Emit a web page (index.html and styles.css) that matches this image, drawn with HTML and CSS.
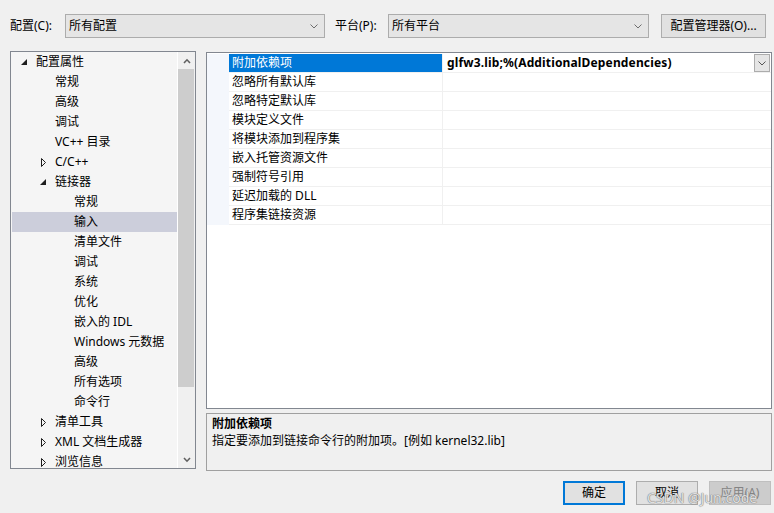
FILE: index.html
```html
<!DOCTYPE html>
<html lang="zh-CN">
<head>
<meta charset="utf-8">
<title>属性页</title>
<link rel="stylesheet" href="styles.css">
</head>
<body>
<div class="dialog">
  <div class="toolbar">
    <span class="lbl">配置(C):</span>
    <div class="combo combo-config">
      <span>所有配置</span>
      <svg class="chev" width="8" height="5" viewBox="0 0 8 5"><path d="M0.5 0.5L4 4L7.5 0.5" stroke="#6d6d6d" fill="none"/></svg>
    </div>
    <span class="lbl lbl-platform">平台(P):</span>
    <div class="combo combo-platform">
      <span>所有平台</span>
      <svg class="chev" width="8" height="5" viewBox="0 0 8 5"><path d="M0.5 0.5L4 4L7.5 0.5" stroke="#6d6d6d" fill="none"/></svg>
    </div>
    <button class="btn btn-manager">配置管理器(O)...</button>
  </div>

  <div class="main">
    <div class="tree-panel">
      <ul class="tree">
        <li class="row l0"><span class="tog"><svg width="6" height="6" viewBox="0 0 6 6"><path d="M6 0V6H0Z" fill="#1e1e1e"/></svg></span>配置属性</li>
        <li class="row l1"><span class="tog"></span>常规</li>
        <li class="row l1"><span class="tog"></span>高级</li>
        <li class="row l1"><span class="tog"></span>调试</li>
        <li class="row l1"><span class="tog"></span>VC++ 目录</li>
        <li class="row l1"><span class="tog"><svg width="5" height="9" viewBox="0 0 5 9"><path d="M0.5 0.5L4.5 4.5L0.5 8.5Z" fill="none" stroke="#1e1e1e"/></svg></span>C/C++</li>
        <li class="row l1"><span class="tog"><svg width="6" height="6" viewBox="0 0 6 6"><path d="M6 0V6H0Z" fill="#1e1e1e"/></svg></span>链接器</li>
        <li class="row l2"><span class="tog"></span>常规</li>
        <li class="row l2 sel"><span class="tog"></span>输入</li>
        <li class="row l2"><span class="tog"></span>清单文件</li>
        <li class="row l2"><span class="tog"></span>调试</li>
        <li class="row l2"><span class="tog"></span>系统</li>
        <li class="row l2"><span class="tog"></span>优化</li>
        <li class="row l2"><span class="tog"></span>嵌入的 IDL</li>
        <li class="row l2"><span class="tog"></span>Windows 元数据</li>
        <li class="row l2"><span class="tog"></span>高级</li>
        <li class="row l2"><span class="tog"></span>所有选项</li>
        <li class="row l2"><span class="tog"></span>命令行</li>
        <li class="row l1"><span class="tog"><svg width="5" height="9" viewBox="0 0 5 9"><path d="M0.5 0.5L4.5 4.5L0.5 8.5Z" fill="none" stroke="#1e1e1e"/></svg></span>清单工具</li>
        <li class="row l1"><span class="tog"><svg width="5" height="9" viewBox="0 0 5 9"><path d="M0.5 0.5L4.5 4.5L0.5 8.5Z" fill="none" stroke="#1e1e1e"/></svg></span>XML 文档生成器</li>
        <li class="row l1"><span class="tog"><svg width="5" height="9" viewBox="0 0 5 9"><path d="M0.5 0.5L4.5 4.5L0.5 8.5Z" fill="none" stroke="#1e1e1e"/></svg></span>浏览信息</li>
      </ul>
      <div class="vscroll">
        <div class="sb-btn"><svg width="8" height="6" viewBox="0 0 8 6"><path d="M1 5L4 1.8L7 5" stroke="#606060" stroke-width="1.6" fill="none"/></svg></div>
        <div class="sb-track"><div class="thumb"></div></div>
        <div class="sb-btn"><svg width="8" height="6" viewBox="0 0 8 6"><path d="M1 1L4 4.2L7 1" stroke="#606060" stroke-width="1.6" fill="none"/></svg></div>
      </div>
    </div>

    <div class="right">
      <div class="grid">
        <div class="prow">
          <div class="gutter"></div>
          <div class="name sel-name">附加依赖项</div>
          <div class="value">
            <span class="val-text">glfw3.lib;%(AdditionalDependencies)</span>
            <span class="drop"><svg width="8" height="5" viewBox="0 0 8 5"><path d="M0.5 0.5L4 4L7.5 0.5" stroke="#555" fill="none"/></svg></span>
          </div>
        </div>
        <div class="prow"><div class="gutter"></div><div class="name">忽略所有默认库</div><div class="value"></div></div>
        <div class="prow"><div class="gutter"></div><div class="name">忽略特定默认库</div><div class="value"></div></div>
        <div class="prow"><div class="gutter"></div><div class="name">模块定义文件</div><div class="value"></div></div>
        <div class="prow"><div class="gutter"></div><div class="name">将模块添加到程序集</div><div class="value"></div></div>
        <div class="prow"><div class="gutter"></div><div class="name">嵌入托管资源文件</div><div class="value"></div></div>
        <div class="prow"><div class="gutter"></div><div class="name">强制符号引用</div><div class="value"></div></div>
        <div class="prow"><div class="gutter"></div><div class="name">延迟加载的 DLL</div><div class="value"></div></div>
        <div class="prow"><div class="gutter"></div><div class="name">程序集链接资源</div><div class="value"></div></div>
      </div>
      <div class="desc">
        <div class="desc-title">附加依赖项</div>
        <div class="desc-text">指定要添加到链接命令行的附加项。[例如 kernel32.lib]</div>
      </div>
    </div>
  </div>

  <div class="footer">
    <button class="btn btn-foot btn-ok">确定</button>
    <button class="btn btn-foot">取消</button>
    <button class="btn btn-foot btn-disabled">应用(A)</button>
  </div>

  <div class="watermark">CSDN @Jun.code</div>
</div>
</body>
</html>
```

FILE: styles.css
```css
* { box-sizing: border-box; }

body {
  margin: 0;
  background: #f0f0f0;
  font-family: "Noto Sans", "Noto Sans CJK SC", sans-serif;
  font-size: 12px;
  color: #000;
}

.dialog {
  width: 774px;
  height: 513px;
  position: relative;
  overflow: hidden;
}

/* ---------- top bar ---------- */
.toolbar {
  display: flex;
  align-items: center;
  padding: 14px 0 0 10px;
}

.lbl {
  width: 55px;
  line-height: 24px;
  white-space: nowrap;
}

.lbl-platform {
  margin-left: 10px;
  width: 53px;
}

.combo {
  height: 24px;
  border: 1px solid #acacac;
  background: #e5e5e5;
  display: flex;
  align-items: center;
  justify-content: space-between;
  padding: 0 6px 0 3px;
  line-height: 22px;
}

.combo-config { width: 260px; }
.combo-platform { width: 261px; }

.btn {
  font: inherit;
  color: #000;
  border: 1px solid #adadad;
  background: #e1e1e1;
  padding: 0;
  height: 24px;
  line-height: 20px;
}

.btn-manager {
  margin-left: 12px;
  width: 105px;
}

/* ---------- main area ---------- */
.main {
  display: flex;
  align-items: flex-start;
  margin-top: 13px;
  padding-left: 10px;
}

.tree-panel {
  width: 186px;
  height: 418px;
  border: 1px solid #828790;
  background: #f5f5f5;
  display: flex;
}

.tree {
  width: 167px;
  list-style: none;
  margin: 0;
  padding: 0 0 0 1px;
  overflow: hidden;
  border-right: 1px solid #ffffff;
}

.row {
  height: 20px;
  line-height: 20px;
  display: flex;
  align-items: center;
  white-space: nowrap;
}

.row.sel { background: #cccedb; }

.l0 { padding-left: 5px; }
.l1 { padding-left: 24px; }
.l2 { padding-left: 43px; }

.tog {
  width: 14px;
  margin-right: 5px;
  height: 20px;
  display: flex;
  align-items: center;
  justify-content: center;
  flex: none;
}

.vscroll {
  width: 17px;
  display: flex;
  flex-direction: column;
  background: #f0f0f0;
}

.sb-btn {
  height: 17px;
  display: flex;
  align-items: center;
  justify-content: center;
}

.sb-track {
  flex: 1;
  display: flex;
  flex-direction: column;
}

.thumb {
  height: 318px;
  margin: 0 1px 0 0;
  background: #cdcdcd;
}

/* ---------- property grid ---------- */
.right {
  margin-left: 10px;
  margin-top: 1px;
  width: 566px;
  display: flex;
  flex-direction: column;
}

.grid {
  height: 357px;
  border: 1px solid #828790;
  background: #ffffff;
  padding-top: 1px;
}

.prow {
  display: flex;
  height: 19px;
}

.gutter {
  width: 22px;
  background: #f4f7fc;
  flex: none;
}

.name {
  width: 214px;
  flex: none;
  padding-left: 3px;
  line-height: 18px;
  border-bottom: 1px solid #f0f0f0;
  border-right: 1px solid #f0f0f0;
  white-space: nowrap;
}

.sel-name {
  background: #0078d7;
  color: #ffffff;
}

.value {
  flex: 1;
  display: flex;
  align-items: flex-start;
  justify-content: space-between;
  padding-left: 4px;
  line-height: 18px;
  border-bottom: 1px solid #f0f0f0;
}

.val-text {
  font-weight: bold;
  white-space: nowrap;
  letter-spacing: 0.15px;
}

.drop {
  width: 16px;
  height: 18px;
  margin-right: 1px;
  border: 1px solid #acacac;
  background: #e5e5e5;
  display: flex;
  align-items: center;
  justify-content: center;
}

.desc {
  margin-top: 4px;
  height: 58px;
  border: 1px solid #a0a0a0;
  background: #f0f0f0;
  padding: 1px 5px;
  line-height: 17px;
}

.desc-title { font-weight: bold; }

/* ---------- footer ---------- */
.footer {
  display: flex;
  justify-content: flex-end;
  gap: 11px;
  padding-right: 3px;
  margin-top: 10px;
}

.btn-foot { width: 62px; }

.btn-ok { border: 2px solid #0078d7; }

.btn-disabled {
  background: #cccccc;
  border-color: #bfbfbf;
  color: #838383;
}

.watermark {
  position: absolute;
  left: 647px;
  top: 489px;
  font-size: 14px;
  line-height: 18px;
  color: rgba(255, 255, 255, 0.8);
  text-shadow: 0 0 1px #6e6e6e, 0 0 1px #6e6e6e;
  white-space: nowrap;
  pointer-events: none;
}
```
